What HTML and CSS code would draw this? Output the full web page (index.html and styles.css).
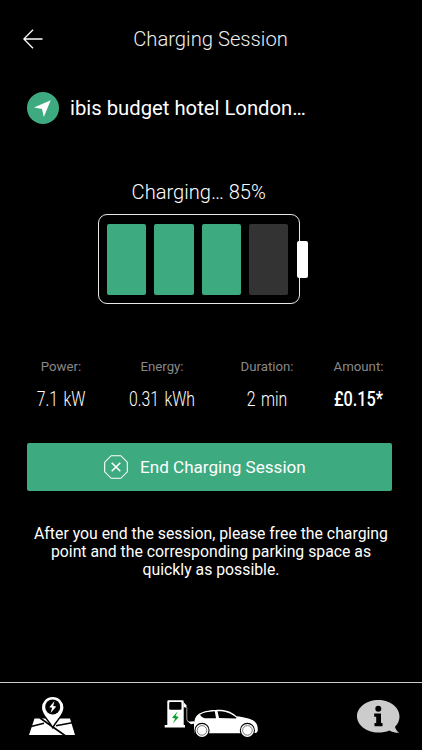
FILE: index.html
```html
<!DOCTYPE html>
<html lang="en">
<head>
<meta charset="utf-8">
<title>Charging Session</title>
<link rel="stylesheet" href="styles.css">
</head>
<body>
<div class="app">
  <header class="header">
    <svg class="back" viewBox="0 0 20 20" width="20" height="20"><path d="M19.500 10H1M10 .8L.8 10l9.200 9.200"/></svg>
    <h1 class="title">Charging Session</h1>
  </header>
  <main class="main">
    <div class="location">
      <svg viewBox="0 0 32 32" width="32" height="32"><circle cx="16" cy="16" r="16" fill="#3daa80"/><path d="M23.700 8.300L7 15.500l8 1.500 1.800 8z" fill="#fff"/></svg>
      <span class="place">ibis budget hotel London…</span>
    </div>
    <p class="status">Charging… 85%</p>
    <div class="battery">
      <div class="case">
        <i class="cell on"></i><i class="cell on"></i><i class="cell on"></i><i class="cell"></i>
      </div>
      <i class="terminal"></i>
    </div>
    <dl class="stats">
      <div class="stat"><dt>Power:</dt><dd>7.1 kW</dd></div>
      <div class="stat"><dt>Energy:</dt><dd>0.31 kWh</dd></div>
      <div class="stat"><dt>Duration:</dt><dd>2 min</dd></div>
      <div class="stat"><dt>Amount:</dt><dd class="strong">£0.15*</dd></div>
    </dl>
    <button class="end">
      <svg viewBox="0 0 24 24" width="24" height="24" fill="none" stroke="#fff"><path d="M7.200.7h9.600l6.500 6.500v9.600l-6.500 6.500H7.200L.7 16.800V7.200z" stroke-width="1.100"/><path d="M7.700 7.700l8.600 8.600m0-8.600l-8.600 8.600" stroke-width="1.600"/></svg>
      <span class="end-label">End Charging Session</span>
    </button>
    <p class="note">After you end the session, please free the charging<br>point and the corresponding parking space as<br>quickly as possible.</p>
  </main>
  <nav class="nav">
    <svg class="map" viewBox="0 0 46 40" width="46" height="40">
      <path d="M5.500 21.500h35.500l5 16.500H0z" fill="#fff"/>
      <path d="M2 29.500l13-3.300M11 21l25 17.500M27 28.800l16-3" stroke="#000" stroke-width="1.600" fill="none"/>
      <path d="M23.700-.6C17-.6 12.300 4.500 12.300 10.700c0 7 6.500 11.300 11.400 20 4.900-8.700 11.400-13 11.400-20C35.100 4.500 30.400-.6 23.700-.6z" fill="#fff" stroke="#000" stroke-width="1.400"/>
      <circle cx="23.700" cy="9.900" r="7.500" fill="#000"/>
      <path d="M25.500 4l-5.200 6.300 2.800.5-1.500 5.200 5.700-6.600-3.100-.5z" fill="#fff"/>
    </svg>
    <svg class="car" viewBox="0 0 94 40" width="94" height="40">
      <path d="M2.300 1.500Q2.300.3 3.500.3h14q1.200 0 1.200 1.200v23.500h1.300v2.500H-.3v-2.500h2.600z" fill="#fff"/>
      <rect x="4.200" y="1.900" width="12.300" height="7.800" rx="1.200" fill="#000"/>
      <path d="M12.700 11.300l-5.600 6.400 3.100.8-2.300 5 5.800-6.500-3.200-.9z" fill="#079e25"/>
      <path d="M18.500 2.500l2.300 2.300.2 1.600q.8.500.8 2v10.500q0 3 2.500 3" fill="none" stroke="#ccc" stroke-width=".8"/>
      <path d="M18.500 2.500l2.700 2.700v2.500l-2.700-.7z" fill="#fff"/>
      <path d="M23 21.800l6-.6 2 2-5 1z" fill="#fff"/>
      <path d="M29 26c0-6 1.500-10 5-12.300 4.500-2.500 9-3.600 16.500-3.800 9-.3 14 .6 21 6.300 7 .8 13.500 2 17.500 4.800 3.300 2.300 3.800 5.500 3.800 9 0 2.400-1.800 3.300-4.300 3.300H30c-1.200-2.300-1-4.800-1-7.300z" fill="#fff"/>
      <path d="M35 14.700c3.500-2.200 8-3 14.800-3.400l1.200 7H41.500c-4-.3-5.500-2-6.500-3.600zM52.500 11.300c8 0 13 1.500 19 6.500l-.5.700-17-.5z" fill="#000"/>
      <circle cx="37" cy="30.400" r="7.600" fill="#000"/><circle cx="37" cy="30.400" r="6.500" fill="#fff"/><circle cx="37" cy="30.400" r="4.800" fill="none" stroke="#222" stroke-width=".6"/>
      <circle cx="82.400" cy="30.400" r="7.600" fill="#000"/><circle cx="82.400" cy="30.400" r="6.500" fill="#fff"/><circle cx="82.400" cy="30.400" r="4.800" fill="none" stroke="#222" stroke-width=".6"/>
    </svg>
    <svg class="info" viewBox="0 0 43 34" width="43" height="34">
      <path d="M21.300 0C33 0 42.500 7.300 42.500 16.300c0 4.300-1.500 7.700-4.500 10.400.7 2.700 2.200 4.700 4.300 6.100-3.800 0-7.300-.9-10-2.300-3.300 1.400-7 2.100-11 2.100C9.600 32.600 0 25.300 0 16.300S9.600 0 21.300 0z" fill="#ccc"/>
      <circle cx="21.300" cy="8.700" r="3" fill="#000"/>
      <path d="M17.200 13.500h6.800v9.500h1.500v3.200h-8v-3.200h1.700v-6.300h-2z" fill="#000"/>
    </svg>
  </nav>
</div>
</body>
</html>
```
FILE: styles.css
```css
* { box-sizing: border-box; }
body { margin: 0; background: #000; color: #fff; font-family: Roboto, "Liberation Sans", sans-serif; }
.app { width: 422px; height: 750px; display: flex; flex-direction: column; overflow: hidden; background: #000; }
.header { height: 78px; display: grid; grid-template-columns: 51px 1fr 51px; align-items: center; }
.back { margin-left: 23px; fill: none; stroke: #fff; stroke-width: 1.3; }
.title { margin: 0; padding-right: 1px; text-align: center; font-size: 21px; font-weight: 300; line-height: 26px; color: #eee; transform: scaleX(.963); }
.main { flex: 1; padding: 0 30px 0 27px; }
.location { display: flex; align-items: center; gap: 11px; height: 32px; margin-top: 14px; }
.place { font-size: 20.500px; line-height: 26px; white-space: nowrap; transform: scaleX(.988); transform-origin: left; }
.status { margin: 55px 0 0; padding-right: 22px; text-align: center; font-size: 20.500px; font-weight: 300; line-height: 26px; transform: scaleX(.98); }
.battery { display: flex; align-items: center; margin: 9px 0 0 71px; }
.case { width: 202px; height: 90px; display: flex; gap: 8px; padding: 9px 11px 8px 8px; border: 1px solid #e8e8e8; border-radius: 9px; }
.cell { flex: 1; background: #333; border-radius: 2px; }
.cell.on { background: #3daa80; }
.terminal { width: 11px; height: 37px; margin: 1px 0 0 -3px; background: #fff; border-radius: 2px; z-index: 1; }
.stats { display: grid; grid-template-columns: 68px 134px 76px 107px; margin: 53px -10px 0 0; }
.stat { text-align: center; }
.stat dt { font-size: 13.500px; line-height: 18px; color: #888; font-weight: 400; transform: scaleX(.98); }
.stat dd { margin: 11px 0 0; font-size: 20px; line-height: 26px; font-weight: 300; white-space: nowrap; word-spacing: 2px; transform: scaleX(.79); }
.stat dd.strong { font-weight: 500; transform: scaleX(.815); }
.end { display: flex; align-items: center; gap: 12px; width: 365px; height: 48px; margin-top: 31px; padding: 0 0 0 77px; border: 0; border-radius: 2px; background: #3daa80; color: #fff; font-family: inherit; }
.end-label { font-size: 17.100px; white-space: nowrap; }
.note { margin: 34px -10px 0 -7px; text-align: center; font-size: 15.800px; line-height: 18px; white-space: nowrap; }
.nav { display: flex; height: 68px; border-top: 1px solid #ccc; align-items: flex-start; }
.map { margin: 14px 0 0 29px; }
.car { margin: 17px 0 0 90px; overflow: visible; }
.info { margin: 17px 0 0 98px; }
```
